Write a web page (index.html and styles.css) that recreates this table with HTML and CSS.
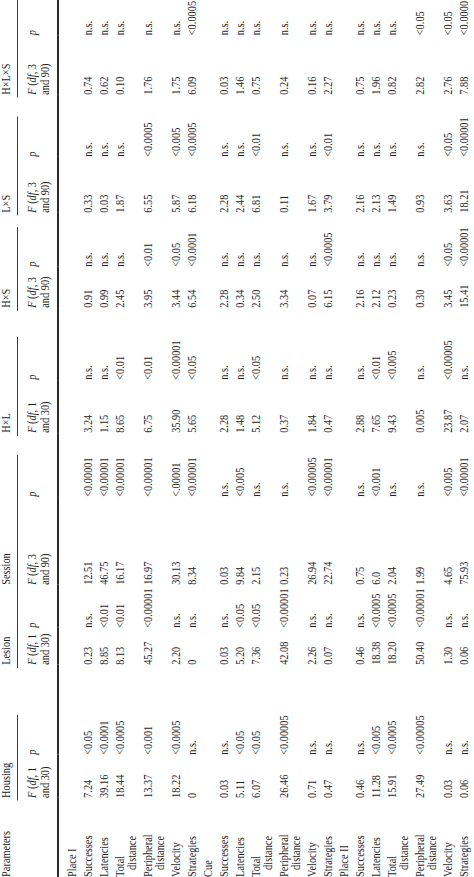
FILE: index.html
```html
<!DOCTYPE html>
<html>
<head>
<meta charset="utf-8">
<link rel="stylesheet" href="styles.css">
</head>
<body>
<div class="page">
<div class="rot">
<table class="t">
<colgroup>
<col class="c0"><col class="c1"><col class="c2"><col class="c3"><col class="c4"><col class="c5"><col class="c6"><col class="c7"><col class="c8"><col class="c9"><col class="c10"><col class="c11"><col class="c12"><col class="c13"><col class="c14">
</colgroup>
<thead>
<tr class="g">
<th rowspan="2" class="param">Parameters</th>
<th colspan="2" class="grp"><div class="gl gl-h">Housing</div></th>
<th colspan="2" class="grp"><div class="gl gl-l">Lesion</div></th>
<th colspan="2" class="grp"><div class="gl gl-s">Session</div></th>
<th colspan="2" class="grp"><div class="gl gl-hl">H×L</div></th>
<th colspan="2" class="grp"><div class="gl gl-hs">H×S</div></th>
<th colspan="2" class="grp"><div class="gl gl-ls">L×S</div></th>
<th colspan="2" class="grp"><div class="gl gl-hls">H×L×S</div></th>
</tr>
<tr class="s">
<th><i>F</i> (<i>df</i>, 1<br>and 30)</th><th><i>p</i></th>
<th><i>F</i> (<i>df</i>, 1<br>and 30)</th><th><i>p</i></th>
<th><i>F</i> (<i>df</i>, 3<br>and 90)</th><th><i>p</i></th>
<th><i>F</i> (<i>df</i>, 1<br>and 30)</th><th><i>p</i></th>
<th><i>F</i> (<i>df</i>, 3<br>and 90)</th><th><i>p</i></th>
<th><i>F</i> (<i>df</i>, 3<br>and 90)</th><th><i>p</i></th>
<th><i>F</i> (<i>df</i>, 3<br>and 90)</th><th><i>p</i></th>
</tr>
</thead>
<tbody>
<tr class="sec first"><td colspan="15">Place I</td></tr>
<tr><td>Successes</td><td>7.24</td><td>&lt;0.05</td><td>0.23</td><td>n.s.</td><td>12.51</td><td>&lt;0.00001</td><td>3.24</td><td>n.s.</td><td>0.91</td><td>n.s.</td><td>0.33</td><td>n.s.</td><td>0.74</td><td>n.s.</td></tr>
<tr><td>Latencies</td><td>39.16</td><td>&lt;0.0001</td><td>8.85</td><td>&lt;0.01</td><td>46.75</td><td>&lt;0.00001</td><td>1.15</td><td>n.s.</td><td>0.99</td><td>n.s.</td><td>0.03</td><td>n.s.</td><td>0.62</td><td>n.s.</td></tr>
<tr><td>Total<br><span class="ind">distance</span></td><td>18.44</td><td>&lt;0.0005</td><td>8.13</td><td>&lt;0.01</td><td>16.17</td><td>&lt;0.00001</td><td>8.65</td><td>&lt;0.01</td><td>2.45</td><td>n.s.</td><td>1.87</td><td>n.s.</td><td>0.10</td><td>n.s.</td></tr>
<tr><td>Peripheral<br><span class="ind">distance</span></td><td>13.37</td><td>&lt;0.001</td><td>45.27</td><td>&lt;0.00001</td><td>16.97</td><td>&lt;0.00001</td><td>6.75</td><td>&lt;0.01</td><td>3.95</td><td>&lt;0.01</td><td>6.55</td><td>&lt;0.0005</td><td>1.76</td><td>n.s.</td></tr>
<tr><td>Velocity</td><td>18.22</td><td>&lt;0.0005</td><td>2.20</td><td>n.s.</td><td>30.13</td><td>&lt;.00001</td><td>35.90</td><td>&lt;0.00001</td><td>3.44</td><td>&lt;0.05</td><td>5.87</td><td>&lt;0.005</td><td>1.75</td><td>n.s.</td></tr>
<tr><td>Strategies</td><td>0</td><td>n.s.</td><td>0</td><td>n.s.</td><td>8.34</td><td>&lt;0.00001</td><td>5.65</td><td>&lt;0.05</td><td>6.54</td><td>&lt;0.0001</td><td>6.18</td><td>&lt;0.0005</td><td>6.09</td><td>&lt;0.0005</td></tr>
<tr class="sec"><td colspan="15">Cue</td></tr>
<tr><td>Successes</td><td>0.03</td><td>n.s.</td><td>0.03</td><td>n.s.</td><td>0.03</td><td>n.s.</td><td>2.28</td><td>n.s.</td><td>2.28</td><td>n.s.</td><td>2.28</td><td>n.s.</td><td>0.03</td><td>n.s.</td></tr>
<tr><td>Latencies</td><td>5.11</td><td>&lt;0.05</td><td>5.20</td><td>&lt;0.05</td><td>9.84</td><td>&lt;0.005</td><td>1.48</td><td>n.s.</td><td>0.34</td><td>n.s.</td><td>2.44</td><td>n.s.</td><td>1.46</td><td>n.s.</td></tr>
<tr><td>Total<br><span class="ind">distance</span></td><td>6.07</td><td>&lt;0.05</td><td>7.36</td><td>&lt;0.05</td><td>2.15</td><td>n.s.</td><td>5.12</td><td>&lt;0.05</td><td>2.50</td><td>n.s.</td><td>6.81</td><td>&lt;0.01</td><td>0.75</td><td>n.s.</td></tr>
<tr><td>Peripheral<br><span class="ind">distance</span></td><td>26.46</td><td>&lt;0.00005</td><td>42.08</td><td>&lt;0.00001</td><td>0.23</td><td>n.s.</td><td>0.37</td><td>n.s.</td><td>3.34</td><td>n.s.</td><td>0.11</td><td>n.s.</td><td>0.24</td><td>n.s.</td></tr>
<tr><td>Velocity</td><td>0.71</td><td>n.s.</td><td>2.26</td><td>n.s.</td><td>26.94</td><td>&lt;0.00005</td><td>1.84</td><td>n.s.</td><td>0.07</td><td>n.s.</td><td>1.67</td><td>n.s.</td><td>0.16</td><td>n.s.</td></tr>
<tr><td>Strategies</td><td>0.47</td><td>n.s.</td><td>0.07</td><td>n.s.</td><td>22.74</td><td>&lt;0.00001</td><td>0.47</td><td>n.s.</td><td>6.15</td><td>&lt;0.0005</td><td>3.79</td><td>&lt;0.01</td><td>2.27</td><td>n.s.</td></tr>
<tr class="sec"><td colspan="15">Place II</td></tr>
<tr><td>Successes</td><td>0.46</td><td>n.s.</td><td>0.46</td><td>n.s.</td><td>0.75</td><td>n.s.</td><td>2.88</td><td>n.s.</td><td>2.16</td><td>n.s.</td><td>2.16</td><td>n.s.</td><td>0.75</td><td>n.s.</td></tr>
<tr><td>Latencies</td><td>11.28</td><td>&lt;0.005</td><td>18.38</td><td>&lt;0.0005</td><td>6.0</td><td>&lt;0.001</td><td>7.65</td><td>&lt;0.01</td><td>2.12</td><td>n.s.</td><td>2.13</td><td>n.s.</td><td>1.96</td><td>n.s.</td></tr>
<tr><td>Total<br><span class="ind">distance</span></td><td>15.91</td><td>&lt;0.0005</td><td>18.20</td><td>&lt;0.0005</td><td>2.04</td><td>n.s.</td><td>9.43</td><td>&lt;0.005</td><td>0.23</td><td>n.s.</td><td>1.49</td><td>n.s.</td><td>0.82</td><td>n.s.</td></tr>
<tr><td>Peripheral<br><span class="ind">distance</span></td><td>27.49</td><td>&lt;0.00005</td><td>50.40</td><td>&lt;0.00001</td><td>1.99</td><td>n.s.</td><td>0.005</td><td>n.s.</td><td>0.30</td><td>n.s.</td><td>0.93</td><td>n.s.</td><td>2.82</td><td>&lt;0.05</td></tr>
<tr><td>Velocity</td><td>0.03</td><td>n.s.</td><td>1.30</td><td>n.s.</td><td>4.65</td><td>&lt;0.005</td><td>23.87</td><td>&lt;0.00005</td><td>3.45</td><td>&lt;0.05</td><td>3.63</td><td>&lt;0.05</td><td>2.76</td><td>&lt;0.05</td></tr>
<tr><td>Strategies</td><td>0.06</td><td>n.s.</td><td>0.06</td><td>n.s.</td><td>75.93</td><td>&lt;0.00001</td><td>2.07</td><td>n.s.</td><td>15.41</td><td>&lt;0.00001</td><td>18.21</td><td>&lt;0.00001</td><td>7.88</td><td>&lt;0.00001</td></tr>
</tbody>
</table>
</div>
</div>
</body>
</html>
```
FILE: styles.css
```css
html, body {
  margin: 0;
  padding: 0;
  background: #ffffff;
}

.page {
  width: 474px;
  height: 877px;
  overflow: hidden;
}

/* The table is typeset landscape and turned a quarter turn counter-clockwise;
   the slight horizontal condensing matches the narrow scanned type. */
.rot {
  width: 1012px;
  height: 474px;
  transform-origin: 0 0;
  transform: rotate(-90deg) translateX(-877px) scaleX(0.9);
}

.t {
  border-collapse: collapse;
  table-layout: fixed;
  width: 1011.2px;
  margin-top: -1px;
  margin-left: -1px;
  font-family: "Liberation Serif", "Times New Roman", serif;
  font-size: 11.5px;
  color: #1f1f1f;
}

.c0 { width: 87.8px; }
.c1 { width: 47.8px; }
.c2 { width: 100px; }
.c3 { width: 41.1px; }
.c4 { width: 47.8px; }
.c5 { width: 97.8px; }
.c6 { width: 71.1px; }
.c7 { width: 58.9px; }
.c8 { width: 80px; }
.c9 { width: 45.6px; }
.c10 { width: 60px; }
.c11 { width: 62.2px; }
.c12 { width: 68.9px; }
.c13 { width: 66.2px; }
.c14 { width: 76px; }

.t th,
.t td {
  padding: 0;
  text-align: left;
  vertical-align: top;
  font-weight: normal;
  white-space: nowrap;
}

.t .g th {
  line-height: 12px;
}

.t .param {
  border-bottom: 2px solid #2a2a2a;
}

.gl {
  padding-bottom: 5px;
  border-bottom: 1px solid #3a3a3a;
  margin-left: -3.3px;
  padding-left: 3.3px;
}

.gl-h { margin-right: 55.6px; }
.gl-l { margin-right: 3.3px; }
.gl-s { margin-right: 24.4px; }
.gl-hl { margin-right: 32.2px; }
.gl-hs { margin-right: 15.6px; }
.gl-ls { margin-right: 24.4px; }
.gl-hls { margin-right: 0; }

.t .s th {
  line-height: 13px;
  padding-top: 8px;
  padding-bottom: 5px;
  border-bottom: 2px solid #2a2a2a;
}

.t tbody td {
  line-height: 12px;
  padding-top: 2px;
  padding-bottom: 2px;
}

.t tbody .first td {
  padding-top: 7px;
}

.ind {
  padding-left: 7.8px;
}
```
